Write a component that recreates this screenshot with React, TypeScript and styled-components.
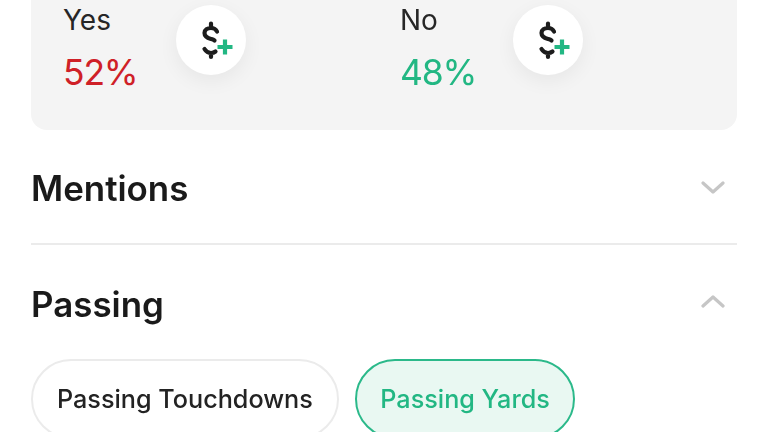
import React from "react";
import styled, { createGlobalStyle } from "styled-components";

const Global = createGlobalStyle`
  html, body { margin: 0; padding: 0; background: #fff; }
  body { width: 768px; height: 432px; overflow: hidden; font-family: Inter, "Liberation Sans", sans-serif; }
`;

const Page = styled.div`
  width: 768px;
  height: 432px;
  overflow: hidden;
  padding: 0 31px;
  box-sizing: border-box;
  filter: blur(0.4px);
`;

const MarketCard = styled.div`
  margin-top: -20px;
  height: 149.5px;
  box-sizing: border-box;
  padding: 25px 33px 0;
  background: #f4f4f4;
  border-radius: 16px;
  display: grid;
  grid-template-columns: 337px 1fr;
`;

const Outcome = styled.div`
  display: flex;
  align-items: flex-start;
`;

const OutcomeText = styled.div`
  width: 112px;
  margin-top: -1px;
  display: flex;
  flex-direction: column;
`;

const OutcomeLabel = styled.div`
  font-size: 28px;
  line-height: 33px;
  color: #262626;
  font-weight: 400;
  margin-left: -1px;
`;

const OutcomePercent = styled.div<{ $color: string }>`
  margin-top: 16px;
  margin-left: -1px;
  font-size: 35.5px;
  line-height: 40px;
  letter-spacing: -1.2px;
  font-weight: 400;
  color: ${(p) => p.$color};
`;

const BetButton = styled.div`
  width: 70px;
  height: 70px;
  border-radius: 50%;
  background: #fff;
  box-shadow: 0 6px 20px rgba(0, 0, 0, 0.06);
  display: flex;
  align-items: center;
  justify-content: center;
`;

const SectionHeader = styled.div<{ $height: number }>`
  height: ${(p) => p.$height}px;
  padding-right: 12px;
  display: flex;
  align-items: center;
  justify-content: space-between;
`;

const SectionTitle = styled.div`
  font-size: 34.9px;
  line-height: 40px;
  margin-top: 3px;
  font-weight: 600;
  color: #1a1a1a;
`;

const Divider = styled.div`
  height: 2px;
  background: #ebebeb;
`;

const ChipRow = styled.div`
  display: flex;
  gap: 16px;
`;

const Chip = styled.div<{ $active?: boolean }>`
  height: 80px;
  box-sizing: border-box;
  padding: 0 ${(p) => (p.$active ? 23.5 : 24)}px;
  border-radius: 40px;
  border: 2px solid ${(p) => (p.$active ? "#2bb98a" : "#ebebeb")};
  background: ${(p) => (p.$active ? "#e9f8f2" : "#fff")};
  color: ${(p) => (p.$active ? "#22b783" : "#232323")};
  font-size: 25.2px;
  line-height: 76px;
  font-weight: 450;
  white-space: nowrap;
`;

const ChevronIcon = styled.svg<{ $up?: boolean }>`
  margin-top: ${(p) => (p.$up ? -2 : 3)}px;
`;

const DollarPlus = () => (
  <svg width="44" height="40" viewBox="0 0 44 40" fill="none">
    <path
      d="M22 3.5V8M28 11.5C27 9.3 25 8 22 8C18.5 8 15.5 9.5 15.5 13C15.5 16.5 18.5 18 22 19C23.5 19.5 24.5 19.8 25.5 20.5M15.5 29C17 31.5 19.5 33 22 33C24 33 25.5 32.3 26.5 31.5M22 33V37"
      stroke="#1c1c1c"
      strokeWidth="4.2"
      strokeLinecap="round"
    />
    <path d="M36 19.5V34.5M28.5 27H43.5" stroke="#22b783" strokeWidth="4.2" />
  </svg>
);

const Chevron = ({ up }: { up?: boolean }) => (
  <ChevronIcon $up={up} width="24" height="14" viewBox="0 0 24 14" fill="none">
    <path
      d={up ? "M2 12L12 3L22 12" : "M2 2L12 11L22 2"}
      stroke="#c6c6c6"
      strokeWidth="3.2"
      strokeLinecap="round"
      strokeLinejoin="round"
    />
  </ChevronIcon>
);

export default function App() {
  return (
    <>
      <Global />
      <Page>
        <MarketCard>
          <Outcome>
            <OutcomeText>
              <OutcomeLabel>Yes</OutcomeLabel>
              <OutcomePercent $color="#cf2027">52%</OutcomePercent>
            </OutcomeText>
            <BetButton><DollarPlus /></BetButton>
          </Outcome>
          <Outcome>
            <OutcomeText>
              <OutcomeLabel>No</OutcomeLabel>
              <OutcomePercent $color="#22b783">48%</OutcomePercent>
            </OutcomeText>
            <BetButton><DollarPlus /></BetButton>
          </Outcome>
        </MarketCard>
        <SectionHeader $height={113.5}>
          <SectionTitle>Mentions</SectionTitle>
          <Chevron />
        </SectionHeader>
        <Divider />
        <SectionHeader $height={114}>
          <SectionTitle>Passing</SectionTitle>
          <Chevron up />
        </SectionHeader>
        <ChipRow>
          <Chip>Passing Touchdowns</Chip>
          <Chip $active>Passing Yards</Chip>
        </ChipRow>
      </Page>
    </>
  );
}
